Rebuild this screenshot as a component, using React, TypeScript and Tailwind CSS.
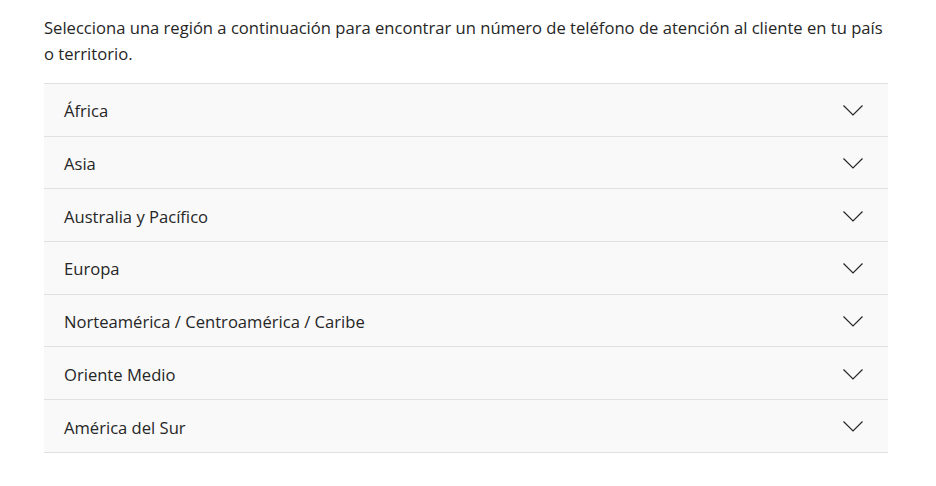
const regions = [
  'África',
  'Asia',
  'Australia y Pacífico',
  'Europa',
  'Norteamérica / Centroamérica / Caribe',
  'Oriente Medio',
  'América del Sur',
];

function Chevron() {
  return (
    <svg width="20" height="11" viewBox="0 0 20 11" fill="none" className="shrink-0 mt-[2px]">
      <polyline points="0.5,0.5 10,10 19.5,0.5" stroke="#262626" strokeWidth="1.2" />
    </svg>
  );
}

export default function App() {
  return (
    <div className="min-h-screen bg-white font-['Open_Sans',sans-serif] text-[#262626]">
      <div className="ml-[44px] mr-[48px] pt-[15px]">
        <p className="text-[16.6px] leading-[26px] mb-[16px]">
          Selecciona una región a continuación para encontrar un número de teléfono de atención al cliente en tu país o territorio.
        </p>
        <div className="border-t border-[#e1e1e1]">
          {regions.map((region) => (
            <button
              key={region}
              className="w-full h-[52.7px] flex items-center justify-between pl-[20px] pr-[25px] bg-[#f9f9f9] border-b border-[#e1e1e1] text-left text-[16.6px]"
            >
              <span className="pt-[4px]">{region}</span>
              <Chevron />
            </button>
          ))}
        </div>
      </div>
    </div>
  );
}
